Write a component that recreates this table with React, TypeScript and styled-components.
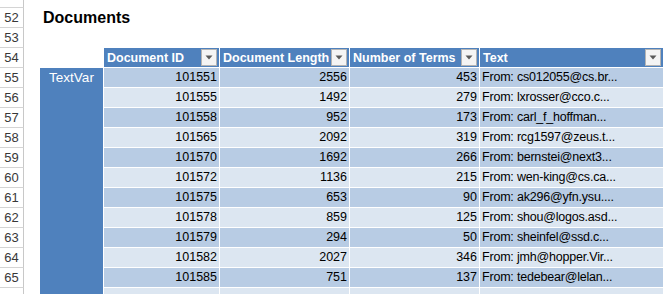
import styled, { createGlobalStyle } from "styled-components";

const GlobalStyle = createGlobalStyle`
  html, body {
    margin: 0;
    padding: 0;
    background: #ffffff;
    overflow: hidden;
  }
  body {
    font-family: "Liberation Sans", Arial, sans-serif;
    color: #000;
  }
`;

const Sheet = styled.div`
  display: grid;
  grid-template-columns: 24px 16px 64px 116px 130px 130px 184px;
  grid-template-rows: repeat(16, 20px);
  margin-top: -12px;
  width: 666px;
`;

const RowNum = styled.div`
  box-sizing: border-box;
  border-right: 1px solid #c8c8c8;
  border-bottom: 1px solid #d4d4d4;
  font-size: 13px;
  color: #383838;
  line-height: 19px;
  text-align: center;
`;

const Blank = styled.div``;

const Title = styled.div`
  grid-column: 3 / span 5;
  padding-left: 3px;
  font-size: 16px;
  font-weight: bold;
  line-height: 20px;
  white-space: nowrap;
`;

const HeaderCell = styled.div`
  box-sizing: border-box;
  display: flex;
  align-items: center;
  justify-content: space-between;
  background: #4f81bd;
  color: #ffffff;
  font-weight: bold;
  font-size: 12.5px;
  padding: 0 2px 0 3px;
  border-right: 1px solid #ffffff;
  border-bottom: 1px solid #ffffff;
  white-space: nowrap;
  overflow: hidden;
`;

const FilterButton = styled.span`
  box-sizing: border-box;
  display: flex;
  align-items: center;
  justify-content: center;
  width: 16px;
  height: 17px;
  flex-shrink: 0;
  background: #f4f4f4;
  border: 1px solid #b4b4b4;
`;

const VarCell = styled.div`
  grid-column: 3;
  grid-row: 5 / span 12;
  box-sizing: border-box;
  background: #4f81bd;
  color: #ffffff;
  font-size: 13.5px;
  line-height: 19px;
  text-align: center;
  border-right: 1px solid #ffffff;
`;

const DataCell = styled.div<{ $dark: boolean; $num?: boolean }>`
  box-sizing: border-box;
  background: ${p => (p.$dark ? "#b8cce4" : "#dce6f1")};
  border-right: 1px solid #ffffff;
  border-bottom: 1px solid #ffffff;
  font-size: 12.5px;
  line-height: 19px;
  text-align: ${p => (p.$num ? "right" : "left")};
  padding: ${p => (p.$num ? "0 2px 0 0" : "0 0 0 2px")};
  letter-spacing: ${p => (p.$num ? "0" : "-0.2px")};
  white-space: nowrap;
  overflow: hidden;
`;

const columns = ["Document ID", "Document Length", "Number of Terms", "Text"];

const rows: [string, string, string, string][] = [
  ["101551", "2556", "453", "From: cs012055@cs.br..."],
  ["101555", "1492", "279", "From: lxrosser@cco.c..."],
  ["101558", "952", "173", "From: carl_f_hoffman..."],
  ["101565", "2092", "319", "From: rcg1597@zeus.t..."],
  ["101570", "1692", "266", "From: bernstei@next3..."],
  ["101572", "1136", "215", "From: wen-king@cs.ca..."],
  ["101575", "653", "90", "From: ak296@yfn.ysu...."],
  ["101578", "859", "125", "From: shou@logos.asd..."],
  ["101579", "294", "50", "From: sheinfel@ssd.c..."],
  ["101582", "2027", "346", "From: jmh@hopper.Vir..."],
  ["101585", "751", "137", "From: tedebear@lelan..."],
  ["", "", "", ""],
];

const Caret = () => (
  <svg width="8" height="5" viewBox="0 0 8 5">
    <path d="M0.5 0.5 H7.5 L4 4.5 Z" fill="#5a5a5a" />
  </svg>
);

const App = () => {
  return (
    <>
      <GlobalStyle />
      <Sheet>
        <VarCell>TextVar</VarCell>

        {/* rows 51-53, only the bottom edge of 51 is on screen */}
        <RowNum />
        <Blank />
        <Blank />
        <Blank />
        <Blank />
        <Blank />
        <Blank />

        <RowNum>52</RowNum>
        <Blank />
        <Title>Documents</Title>

        <RowNum>53</RowNum>
        <Blank />
        <Blank />
        <Blank />
        <Blank />
        <Blank />
        <Blank />

        {/* table header */}
        <RowNum>54</RowNum>
        <Blank />
        <Blank />
        {columns.map(c => (
          <HeaderCell key={c}>
            {c}
            <FilterButton>
              <Caret />
            </FilterButton>
          </HeaderCell>
        ))}

        {rows.map((r, i) => {
          const dark = i % 2 === 0;
          const last = i === rows.length - 1;
          return [
            <RowNum key={`n${i}`}>{last ? "" : 55 + i}</RowNum>,
            <Blank key={`b${i}`} />,
            <DataCell key={`a${i}`} $dark={dark} $num>{r[0]}</DataCell>,
            <DataCell key={`l${i}`} $dark={dark} $num>{r[1]}</DataCell>,
            <DataCell key={`t${i}`} $dark={dark} $num>{r[2]}</DataCell>,
            <DataCell key={`x${i}`} $dark={dark}>{r[3]}</DataCell>,
          ];
        })}
      </Sheet>
    </>
  );
};

export default App;
